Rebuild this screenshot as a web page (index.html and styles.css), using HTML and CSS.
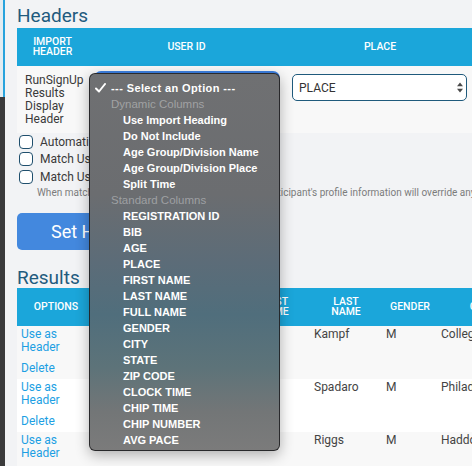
FILE: index.html
```html
<!DOCTYPE html>
<html lang="en">
<head>
    <meta charset="UTF-8">
    <meta name="viewport" content="width=device-width, initial-scale=1.0">
    <title>Results Import - Headers</title>
    <link rel="stylesheet" href="styles.css">
</head>
<body>
    <div class="app-edge">
        <div class="app-edge-cap"></div>
    </div>

    <main class="page">
        <h2 class="section-title headers-title">Headers</h2>
        <table class="grid headers-grid">
            <colgroup>
                <col style="width: 71px">
                <col style="width: 197px">
                <col style="width: 190px">
            </colgroup>
            <thead>
                <tr>
                    <th>Import Header</th>
                    <th>User ID</th>
                    <th>Place</th>
                </tr>
            </thead>
            <tbody>
                <tr class="header-row">
                    <td class="import-label">RunSignUp Results Display Header</td>
                    <td class="select-cell user-cell">
                        <div class="select-box is-open">--- Select an Option ---</div>
                    </td>
                    <td class="select-cell">
                        <div class="select-box">
                            <span>PLACE</span>
                            <svg class="select-arrows" width="6" height="11" viewBox="0 0 6 11">
                                <path d="M0 4.2 L3 0.5 L6 4.2 Z M0 6.8 L3 10.5 L6 6.8 Z" fill="#4a4a4a"/>
                            </svg>
                        </div>
                    </td>
                </tr>
            </tbody>
        </table>

        <div class="match-options">
            <label class="check-row"><span class="checkbox"></span>Automatically match columns</label>
            <label class="check-row"><span class="checkbox"></span>Match Users by Email</label>
            <label class="check-row"><span class="checkbox"></span>Match Users by Name and DOB</label>
            <p class="hint">When matching runners by name and by email, the participant's profile information will override any existing data.</p>
        </div>

        <button class="primary-btn">Set Headers</button>

        <h2 class="section-title results-title">Results</h2>
        <table class="grid results-grid">
            <colgroup>
                <col style="width: 78px">
                <col style="width: 70px">
                <col style="width: 73px">
                <col style="width: 72px">
                <col style="width: 72px">
                <col style="width: 55px">
                <col style="width: 88px">
                <col style="width: 70px">
            </colgroup>
            <thead>
                <tr>
                    <th>Options</th>
                    <th>Place</th>
                    <th>Bib</th>
                    <th>First Name</th>
                    <th>Last Name</th>
                    <th>Gender</th>
                    <th>City</th>
                    <th>State</th>
                </tr>
            </thead>
            <tbody>
                <tr>
                    <td><a href="#" class="row-link">Use as Header</a><a href="#" class="row-link delete-link">Delete</a></td>
                    <td>1</td>
                    <td>1042</td>
                    <td>Jeff</td>
                    <td>Kampf</td>
                    <td>M</td>
                    <td>College Park</td>
                    <td>MD</td>
                </tr>
                <tr>
                    <td><a href="#" class="row-link">Use as Header</a><a href="#" class="row-link delete-link">Delete</a></td>
                    <td>2</td>
                    <td>1187</td>
                    <td>Mike</td>
                    <td>Spadaro</td>
                    <td>M</td>
                    <td>Philadelphia</td>
                    <td>PA</td>
                </tr>
                <tr>
                    <td><a href="#" class="row-link">Use as Header</a><a href="#" class="row-link delete-link">Delete</a></td>
                    <td>3</td>
                    <td>1015</td>
                    <td>Dan</td>
                    <td>Riggs</td>
                    <td>M</td>
                    <td>Haddonfield</td>
                    <td>NJ</td>
                </tr>
            </tbody>
        </table>
    </main>

    <!-- open native menu of the USER ID select -->
    <div class="select-menu">
        <div class="menu-item is-selected">
            <span class="menu-mark">
                <svg width="11" height="10" viewBox="0 0 11 10">
                    <path d="M1 5.5 L4 8.5 L10 1" fill="none" stroke="#fff" stroke-width="2" stroke-linecap="round" stroke-linejoin="round"/>
                </svg>
            </span>
            <span class="select-prompt">--- Select an Option ---</span>
        </div>
        <div class="menu-item menu-group"><span class="menu-mark"></span>Dynamic Columns</div>
        <div class="menu-item menu-sub"><span class="menu-mark"></span>Use Import Heading</div>
        <div class="menu-item menu-sub"><span class="menu-mark"></span>Do Not Include</div>
        <div class="menu-item menu-sub"><span class="menu-mark"></span>Age Group/Division Name</div>
        <div class="menu-item menu-sub"><span class="menu-mark"></span>Age Group/Division Place</div>
        <div class="menu-item menu-sub"><span class="menu-mark"></span>Split Time</div>
        <div class="menu-item menu-group"><span class="menu-mark"></span>Standard Columns</div>
        <div class="menu-item menu-sub"><span class="menu-mark"></span>REGISTRATION ID</div>
        <div class="menu-item menu-sub"><span class="menu-mark"></span>BIB</div>
        <div class="menu-item menu-sub"><span class="menu-mark"></span>AGE</div>
        <div class="menu-item menu-sub"><span class="menu-mark"></span>PLACE</div>
        <div class="menu-item menu-sub"><span class="menu-mark"></span>FIRST NAME</div>
        <div class="menu-item menu-sub"><span class="menu-mark"></span>LAST NAME</div>
        <div class="menu-item menu-sub"><span class="menu-mark"></span>FULL NAME</div>
        <div class="menu-item menu-sub"><span class="menu-mark"></span>GENDER</div>
        <div class="menu-item menu-sub"><span class="menu-mark"></span>CITY</div>
        <div class="menu-item menu-sub"><span class="menu-mark"></span>STATE</div>
        <div class="menu-item menu-sub"><span class="menu-mark"></span>ZIP CODE</div>
        <div class="menu-item menu-sub"><span class="menu-mark"></span>CLOCK TIME</div>
        <div class="menu-item menu-sub"><span class="menu-mark"></span>CHIP TIME</div>
        <div class="menu-item menu-sub"><span class="menu-mark"></span>CHIP NUMBER</div>
        <div class="menu-item menu-sub"><span class="menu-mark"></span>AVG PACE</div>
    </div>
</body>
</html>
```

FILE: styles.css
```css
html, body {
    margin: 0;
    height: 100%;
    overflow: hidden;
}
body {
    display: flex;
    background-color: #f2f3f5;
    font-family: Roboto, "Liberation Sans", sans-serif;
    font-size: 12px;
    color: #3a3a3a;
}
.app-edge {
    flex: none;
    width: 5px;
    background-color: #3a3a3b;
}
.app-edge-cap {
    height: 97px;
    background-color: #e2ecf1;
    border-right: 2px solid #27a3dd;
    box-sizing: border-box;
}
.page {
    flex: none;
    width: 600px;
    padding: 5px 0 0 12px;
}
.section-title {
    margin: 0;
    font-size: 19px;
    line-height: 21px;
    font-weight: 400;
    color: #1f5b7e;
}
.headers-title {
    margin-bottom: 2px;
}
.results-title {
    margin-top: 17px;
}

/* tables */
.grid {
    border-collapse: collapse;
    table-layout: fixed;
}
.grid th {
    height: 38px;
    padding: 0 8px;
    background-color: #1ba6da;
    color: #ffffff;
    font-size: 10.5px;
    line-height: 10.5px;
    font-weight: 500;
    text-align: center;
    text-transform: uppercase;
}
.headers-grid {
    width: 458px;
}
.header-row {
    height: 67px;
}
.header-row td {
    background-color: #f8f8f8;
    vertical-align: top;
}
.import-label {
    padding: 8px 4px 0 8px;
    line-height: 13px;
}
.select-cell {
    padding: 8px 0 0 7px;
}
.user-cell {
    padding-left: 9px;
}
.select-box {
    display: flex;
    align-items: center;
    justify-content: space-between;
    width: 175px;
    height: 27px;
    box-sizing: border-box;
    padding: 0 3px 0 6px;
    background-color: #ffffff;
    border: 1px solid #1f5a7c;
    border-radius: 5px;
    color: #333;
}
.select-box.is-open {
    width: 180px;
    border-color: #3b7fe0;
    box-shadow: 0 0 0 3px #3d80e2;
    border-radius: 4px;
}

/* match options */
.match-options {
    padding-left: 2px;
}
.check-row {
    display: flex;
    align-items: center;
    gap: 7px;
    height: 17.5px;
    white-space: nowrap;
}
.checkbox {
    width: 14px;
    height: 14px;
    box-sizing: border-box;
    border: 1.5px solid #1f4f6d;
    border-radius: 4px;
    background-color: #ffffff;
}
.hint {
    margin: 0;
    padding-left: 18px;
    font-size: 10px;
    line-height: 13px;
    color: #7c7c7c;
    white-space: nowrap;
}
.primary-btn {
    display: block;
    height: 37px;
    margin-top: 14.5px;
    padding: 0 34px;
    border: none;
    border-radius: 5px;
    background-color: #4388de;
    color: #ffffff;
    font-family: inherit;
    font-size: 18px;
    cursor: pointer;
}

/* results */
.results-grid {
    width: 578px;
}
.results-grid tbody tr {
    height: 53px;
}
.results-grid tbody tr:nth-child(odd) td {
    background-color: #f8f8f8;
}
.results-grid tbody tr:nth-child(even) td {
    background-color: #ffffff;
}
.results-grid td {
    padding: 2px 4px 0;
    vertical-align: top;
    line-height: 13px;
    color: #444;
    white-space: nowrap;
}
.results-grid td:first-child {
    white-space: normal;
}
.row-link {
    display: block;
    color: #1d9fe3;
    text-decoration: none;
}
.delete-link {
    margin-top: 8px;
}

/* open select menu */
.select-menu {
    position: absolute;
    left: 89px;
    top: 73px;
    width: 191px;
    height: 378px;
    box-sizing: border-box;
    padding: 6px 0 4px;
    border: 1px solid rgba(28, 28, 30, 0.85);
    border-radius: 6px;
    background: linear-gradient(to bottom, #6f7072 0%, #6b6d70 32%, #5c6c78 50%, #506e7c 64%, #5d7379 78%, #737677 90%, #7b7b7b 100%);
    box-shadow: 0 4px 14px rgba(0, 0, 0, 0.3);
    font-family: "Liberation Sans", Arial, sans-serif;
    font-size: 11px;
    font-weight: bold;
    color: #ffffff;
}
.menu-item {
    display: flex;
    align-items: center;
    height: 16px;
    white-space: nowrap;
}
.menu-mark {
    flex: none;
    display: flex;
    width: 21px;
    padding-left: 5px;
    box-sizing: border-box;
}
.select-prompt {
    letter-spacing: 0.4px;
}
.menu-group {
    font-size: 11.5px;
    font-weight: normal;
    color: rgba(255, 255, 255, 0.36);
}
.menu-sub {
    padding-left: 12px;
}
```
